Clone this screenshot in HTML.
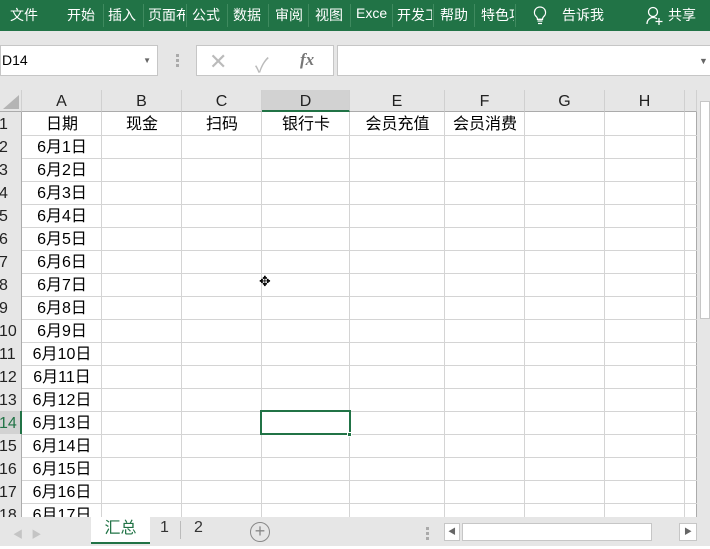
<!DOCTYPE html>
<html><head><meta charset="utf-8"><style>
*{margin:0;padding:0;box-sizing:border-box}
body{width:710px;height:549px;overflow:hidden;background:#e6e6e6;font-family:"Liberation Sans","Noto Sans CJK SC",sans-serif;position:relative}
.rib{position:absolute;left:0;top:0;width:710px;height:31px;background:#217346;color:#fff;font-size:14px}
.rib span{position:absolute;top:5px;overflow:hidden;white-space:nowrap}
.rib i{position:absolute;top:4px;width:1px;height:23px;background:#3f8a5f}
.abs{position:absolute}
.grid{position:absolute;left:0;top:90px;width:697px;height:427px;background:#fff;overflow:hidden}
.ch{position:absolute;top:0;height:22px;background:#e6e6e6;border-right:1px solid #d0d0d0;border-bottom:1px solid #ababab;text-align:center;font-size:16px;line-height:24px;color:#222}
.vl{position:absolute;top:22px;width:1px;height:410px;background:#d4d4d4}
.hl{position:absolute;left:0;width:697px;height:1px;background:#d4d4d4}
.rh{position:absolute;left:0;width:22px;height:23px;background:#e6e6e6;border-right:1px solid #ababab;font-size:16px;line-height:25px;color:#222;overflow:hidden;white-space:nowrap;text-indent:-1px}
.c{position:absolute;font-size:16px;line-height:25px;text-align:center;color:#000;white-space:nowrap}
</style></head><body>
<div class="rib">
<span style="left:10px">文件</span><span style="left:67px">开始</span><i style="left:103px"></i><span style="left:108px">插入</span><i style="left:143px"></i><span style="left:148px;width:37px">页面布</span><i style="left:186px"></i><span style="left:192px">公式</span><i style="left:227px"></i><span style="left:233px">数据</span><i style="left:268px"></i><span style="left:275px">审阅</span><i style="left:308px"></i><span style="left:315px">视图</span><i style="left:350px"></i><span style="left:356px">Exce</span><i style="left:392px"></i><span style="left:397px;width:35px">开发工</span><i style="left:433px"></i><span style="left:440px">帮助</span><i style="left:474px"></i><span style="left:481px;width:33px">特色功</span><i style="left:515px"></i>
<svg class="abs" style="left:533px;top:6px" width="14" height="20" viewBox="0 0 14 20"><path d="M7 1a5.5 5.5 0 0 0-3.5 9.8c.8.8 1 1.5 1 2.5h5c0-1 .2-1.7 1-2.5A5.5 5.5 0 0 0 7 1zM4.5 15h5M5 17.5h4" fill="none" stroke="#fff" stroke-width="1.3"/></svg>
<span style="left:562px">告诉我</span>
<svg class="abs" style="left:646px;top:6px" width="18" height="20" viewBox="0 0 18 20"><circle cx="7" cy="6" r="4.5" fill="none" stroke="#fff" stroke-width="1.3"/><path d="M1 18c0-4 3-6.5 6-6.5 2 0 3 .5 4 1.2M13 12v7M9.5 15.5h7" fill="none" stroke="#fff" stroke-width="1.3"/></svg>
<span style="left:668px">共享</span>
</div>
<div class="abs" style="left:0;top:45px;width:158px;height:31px;background:#fff;border:1px solid #c6c6c6;font-size:14px;line-height:29px;padding-left:1px">D14<span style="position:absolute;right:6px;top:0;font-size:8px;color:#666">▼</span></div>
<div class="abs" style="left:176px;top:54px;width:3px;height:13px;border-left:3px dotted #aaa"></div>
<div class="abs" style="left:196px;top:45px;width:138px;height:31px;background:#fff;border:1px solid #c6c6c6"></div>
<div class="abs" style="left:209px;top:49px;font-size:22px;color:#bbb">✕</div>
<div class="abs" style="left:255px;top:49px;font-size:20px;color:#bbb">✓</div>
<div class="abs" style="left:300px;top:50px;font-size:17px;color:#777;font-family:'Liberation Serif',serif;font-style:italic;font-weight:bold">fx</div>
<div class="abs" style="left:337px;top:45px;width:380px;height:31px;background:#fff;border:1px solid #c6c6c6"></div>
<div class="abs" style="left:699px;top:56px;font-size:9px;color:#666">▼</div>

<div class="grid">
<div class="ch" style="left:0;width:22px;background:#e6e6e6"><svg style="position:absolute;left:3px;top:5px" width="16" height="14"><path d="M16 0V14H0Z" fill="#b4b4b4"/></svg></div>
<div class="ch" style="left:22px;width:80px">A</div>
<div class="ch" style="left:102px;width:80px">B</div>
<div class="ch" style="left:182px;width:80px">C</div>
<div class="ch" style="left:262px;width:88px;background:#d2d2d2;border-bottom:2px solid #217346;color:#222">D</div>
<div class="ch" style="left:350px;width:95px">E</div>
<div class="ch" style="left:445px;width:80px">F</div>
<div class="ch" style="left:525px;width:80px">G</div>
<div class="ch" style="left:605px;width:80px">H</div>
<div class="ch" style="left:685px;width:12px"></div>
<div class="vl" style="left:101px"></div><div class="vl" style="left:181px"></div><div class="vl" style="left:261px"></div><div class="vl" style="left:349px"></div><div class="vl" style="left:444px"></div><div class="vl" style="left:524px"></div><div class="vl" style="left:604px"></div><div class="vl" style="left:684px"></div><div class="vl" style="left:696px;background:#ababab"></div>
<div class="hl" style="top:45px"></div><div class="hl" style="top:68px"></div><div class="hl" style="top:91px"></div><div class="hl" style="top:114px"></div><div class="hl" style="top:137px"></div><div class="hl" style="top:160px"></div><div class="hl" style="top:183px"></div><div class="hl" style="top:206px"></div><div class="hl" style="top:229px"></div><div class="hl" style="top:252px"></div><div class="hl" style="top:275px"></div><div class="hl" style="top:298px"></div><div class="hl" style="top:321px"></div><div class="hl" style="top:344px"></div><div class="hl" style="top:367px"></div><div class="hl" style="top:390px"></div><div class="hl" style="top:413px"></div>
<div class="rh" style="top:22px">1</div><div class="rh" style="top:45px">2</div><div class="rh" style="top:68px">3</div><div class="rh" style="top:91px">4</div><div class="rh" style="top:114px">5</div><div class="rh" style="top:137px">6</div><div class="rh" style="top:160px">7</div><div class="rh" style="top:183px">8</div><div class="rh" style="top:206px">9</div><div class="rh" style="top:229px">10</div><div class="rh" style="top:252px">11</div><div class="rh" style="top:275px">12</div><div class="rh" style="top:298px">13</div><div class="rh" style="top:321px;background:#d2d2d2;border-right:2px solid #217346;color:#217346">14</div><div class="rh" style="top:344px">15</div><div class="rh" style="top:367px">16</div><div class="rh" style="top:390px">17</div><div class="rh" style="top:413px">18</div>
<div class="c" style="left:22px;width:80px;top:22px">日期</div>
<div class="c" style="left:102px;width:80px;top:22px">现金</div>
<div class="c" style="left:182px;width:80px;top:22px">扫码</div>
<div class="c" style="left:262px;width:88px;top:22px">银行卡</div>
<div class="c" style="left:350px;width:95px;top:22px">会员充值</div>
<div class="c" style="left:445px;width:80px;top:22px">会员消费</div>
<div class="c" style="left:22px;width:80px;top:45px">6月1日</div><div class="c" style="left:22px;width:80px;top:68px">6月2日</div><div class="c" style="left:22px;width:80px;top:91px">6月3日</div><div class="c" style="left:22px;width:80px;top:114px">6月4日</div><div class="c" style="left:22px;width:80px;top:137px">6月5日</div><div class="c" style="left:22px;width:80px;top:160px">6月6日</div><div class="c" style="left:22px;width:80px;top:183px">6月7日</div><div class="c" style="left:22px;width:80px;top:206px">6月8日</div><div class="c" style="left:22px;width:80px;top:229px">6月9日</div><div class="c" style="left:22px;width:80px;top:252px">6月10日</div><div class="c" style="left:22px;width:80px;top:275px">6月11日</div><div class="c" style="left:22px;width:80px;top:298px">6月12日</div><div class="c" style="left:22px;width:80px;top:321px">6月13日</div><div class="c" style="left:22px;width:80px;top:344px">6月14日</div><div class="c" style="left:22px;width:80px;top:367px">6月15日</div><div class="c" style="left:22px;width:80px;top:390px">6月16日</div><div class="c" style="left:22px;width:80px;top:413px">6月17日</div>
<div class="abs" style="left:260px;top:320px;width:91px;height:25px;border:2px solid #217346"></div>
<div class="abs" style="left:347px;top:342px;width:5px;height:5px;background:#217346;border:1px solid #fff"></div>
<div class="abs" style="left:259px;top:183px;font-size:14px;color:#000">✥</div>
</div>
<div class="abs" style="left:699px;top:89px;width:11px;height:428px;background:#e6e6e6"></div>
<div class="abs" style="left:700px;top:101px;width:10px;height:218px;background:#fff;border:1px solid #c6c6c6"></div>

<div class="abs" style="left:0;top:517px;width:710px;height:29px;background:#e6e6e6"></div>
<div class="abs" style="left:13px;top:526px;font-size:10px;color:#c4c4c4">◀ &nbsp; ▶</div>
<div class="abs" style="left:91px;top:517px;width:59px;height:27px;background:#fff;border-bottom:2px solid #217346;color:#217346;font-size:16px;text-align:center;line-height:24px">汇总</div>
<div class="abs" style="left:160px;top:519px;font-size:16px;color:#333">1</div>
<div class="abs" style="left:180px;top:521px;width:1px;height:18px;background:#bbb"></div>
<div class="abs" style="left:194px;top:519px;font-size:16px;color:#333">2</div>
<div class="abs" style="left:250px;top:522px;width:20px;height:20px;border:1px solid #888;border-radius:50%;text-align:center;line-height:17px;font-size:18px;color:#888">+</div>
<div class="abs" style="left:426px;top:527px;width:3px;height:13px;border-left:3px dotted #aaa"></div>
<div class="abs" style="left:444px;top:523px;width:16px;height:18px;background:#fff;border:1px solid #c6c6c6;font-size:8px;color:#666;text-align:center;line-height:16px">◀</div>
<div class="abs" style="left:462px;top:523px;width:190px;height:18px;background:#fff;border:1px solid #c6c6c6"></div>
<div class="abs" style="left:679px;top:523px;width:18px;height:18px;background:#fff;border:1px solid #c6c6c6;font-size:8px;color:#666;text-align:center;line-height:16px">▶</div>
<div class="abs" style="left:0;top:546px;width:710px;height:3px;background:#fff"></div>
</body></html>
